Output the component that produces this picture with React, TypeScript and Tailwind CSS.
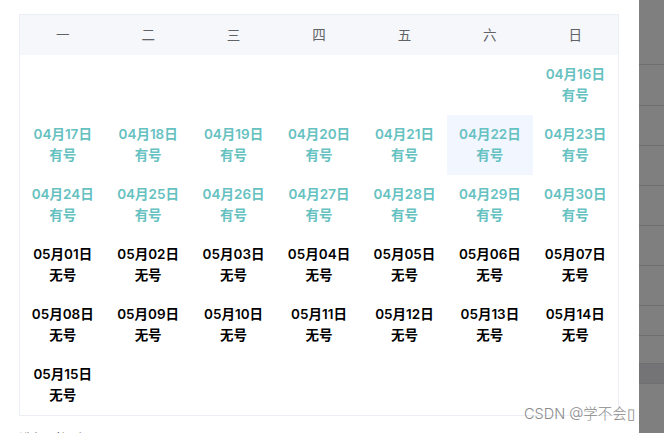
const weekDays = ['一', '二', '三', '四', '五', '六', '日'];

type Cell = { date: string; has: boolean } | null;

const buildCells = (): Cell[] => {
  const cells: Cell[] = [null, null, null, null, null, null];
  for (let d = 16; d <= 30; d++) cells.push({ date: `04月${d}日`, has: true });
  for (let d = 1; d <= 15; d++) cells.push({ date: `05月${String(d).padStart(2, '0')}日`, has: false });
  return cells;
};

const sideLines = [65, 41, 40, 40, 40, 40, 40, 30, 28];

const App = () => {
  const cells = buildCells();
  const rows: Cell[][] = [];
  for (let i = 0; i < cells.length; i += 7) rows.push(cells.slice(i, i + 7));

  return (
    <div
      className="relative w-[664px] h-[433px] overflow-hidden flex bg-white"
      style={{ fontFamily: 'Inter, "Noto Sans CJK SC", sans-serif' }}
    >
      <div className="w-[639px] shrink-0 pl-[19px] pt-[14px]">
        <div className="w-[600px] border border-[#ebeef5]">
          <div className="grid grid-cols-7 h-[40px] bg-[#f5f7fa] text-[13.5px] text-[#606266]">
            {weekDays.map((d) => (
              <div key={d} className="flex items-center justify-center">
                {d}
              </div>
            ))}
          </div>
          {rows.map((row, ri) => (
            <div key={ri} className="grid grid-cols-7 h-[60px]">
              {row.map((c, ci) => (
                <div
                  key={ci}
                  className={`flex flex-col items-center justify-center text-[13.5px] font-semibold leading-[21px] ${
                    c?.has ? 'text-[#66c1c1]' : 'text-black'
                  } ${c?.date === '04月22日' ? 'bg-[#f2f6ff]' : ''}`}
                >
                  {c && (
                    <>
                      <span>{c.date}</span>
                      <span>{c.has ? '有号' : '无号'}</span>
                    </>
                  )}
                </div>
              ))}
            </div>
          ))}
        </div>
        <div className="mt-[13px] text-[14px] text-[#606266] leading-[20px]">选择时间段</div>
      </div>
      <div className="flex-1 bg-[#7f7f7f] flex flex-col">
        {sideLines.map((h, i) => (
          <div key={i} style={{ height: h }} className="shrink-0 border-b border-[#6f6f70]" />
        ))}
        <div className="h-[20px] bg-[#747476] border-b border-[#6f6f70]" />
      </div>
      <div className="absolute left-[524px] top-[403px] text-[14.5px] font-light text-[#8a8a8a]">
        CSDN @学不会▯
      </div>
    </div>
  );
};

export default App;
